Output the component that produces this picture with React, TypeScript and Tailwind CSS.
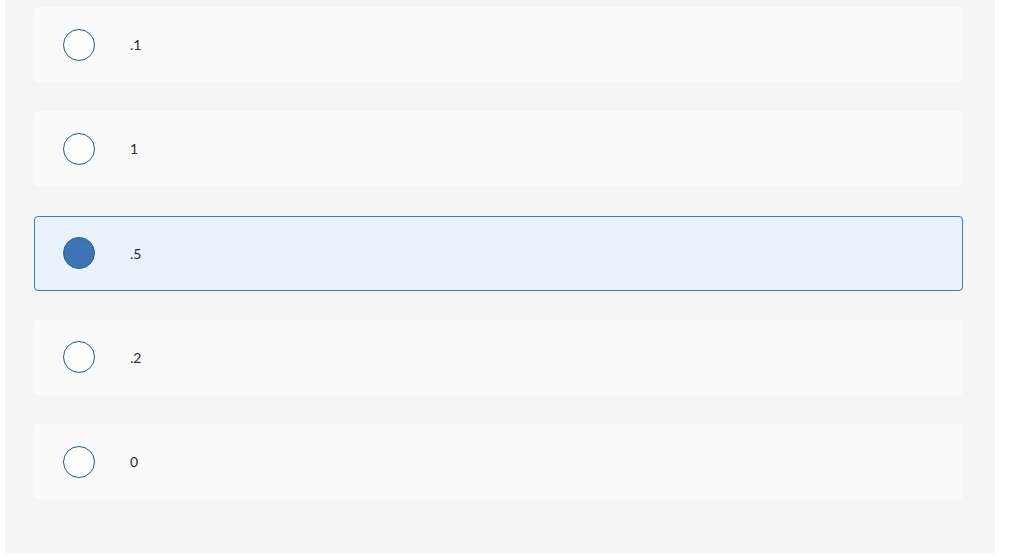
const options = [
  { id: 'a', label: '.1' },
  { id: 'b', label: '1' },
  { id: 'c', label: '.5' },
  { id: 'd', label: '.2' },
  { id: 'e', label: '0' },
];

export default function App() {
  const selected = 'c';

  return (
    <div className="w-[1024px] h-[556px] bg-white" style={{ fontFamily: "Lato, 'Open Sans', sans-serif" }}>
      <div className="ml-[5px] w-[990px] h-[553px] bg-[#f5f5f5] pl-[29px] pr-[32px] pt-[7px]">
        <div className="flex flex-col gap-[29.25px]">
          {options.map(opt => {
            const isSel = opt.id === selected;
            return (
              <div
                key={opt.id}
                className={`h-[75px] flex items-center pl-[28px] rounded-[4px] border ${
                  isSel ? 'bg-[#eaf2fb] border-[#3b7bc4]' : 'bg-[#fafafa] border-transparent'
                }`}
              >
                <span
                  className={`w-[32px] h-[32px] rounded-full border shrink-0 ${
                    isSel ? 'bg-[#3c74b6] border-[#2d5f98]' : 'bg-white border-[#1f5a94]'
                  }`}
                />
                <span className="ml-[35px] text-[14px] text-[#2b2b2b]">{opt.label}</span>
              </div>
            );
          })}
        </div>
      </div>
    </div>
  );
}
